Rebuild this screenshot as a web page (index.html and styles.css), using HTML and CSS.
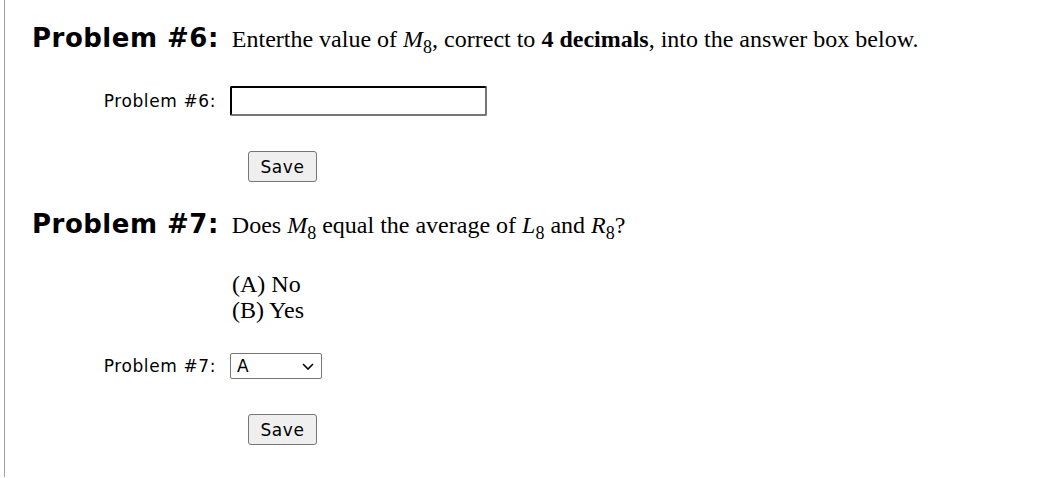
FILE: index.html
```html
<!DOCTYPE html>
<html lang="en">

<head>
    <meta charset="UTF-8">
    <title>Problems</title>
    <link rel="stylesheet" href="styles.css">
</head>

<body>
    <div class="page">
        <div class="problem">
            <h2><span class="num">Problem #6:</span> Enterthe value of <i>M</i><sub>8</sub>, correct to <b>4 decimals</b>, into the answer box below.</h2>
            <div class="answer">
                <label for="p6">Problem #6:</label>
                <input type="text" id="p6" class="box">
            </div>
            <div class="save"><button>Save</button></div>
        </div>

        <div class="problem">
            <h2><span class="num">Problem #7:</span> Does <i>M</i><sub>8</sub> equal the average of <i>L</i><sub>8</sub> and <i>R</i><sub>8</sub>?</h2>
            <div class="choices">
                (A) No<br>
                (B) Yes
            </div>
            <div class="answer">
                <label for="p7">Problem #7:</label>
                <div class="pick-wrap">
                    <select id="p7" class="pick">
                        <option>A</option>
                        <option>B</option>
                    </select>
                    <svg class="chev" width="12" height="7" viewBox="0 0 12 7">
                        <path d="M1 1 L6 6 L11 1" fill="none" stroke="#000" stroke-width="1.6" />
                    </svg>
                </div>
            </div>
            <div class="save"><button>Save</button></div>
        </div>
    </div>
</body>

</html>
```

FILE: styles.css
```css
body {
    margin: 0;
    background: #fff;
    color: #000;
}

.page {
    margin-left: 4px;
    border-left: 1px solid #a0a0a0;
    padding: 19px 0 0 27px;
    height: 458px;
}

h2 {
    margin: 0;
    font-family: 'Liberation Serif', 'Times New Roman', serif;
    font-weight: normal;
    font-size: 24px;
    line-height: 38px;
}

h2 .num {
    font-family: 'DejaVu Sans', Verdana, sans-serif;
    font-weight: bold;
    font-size: 26px;
    letter-spacing: 0.5px;
    margin-right: 7px;
}

sub {
    font-size: 0.75em;
    line-height: 0;
}

.answer {
    display: flex;
    align-items: center;
    margin-top: 28px;
    font-family: 'DejaVu Sans', Verdana, sans-serif;
    font-size: 17px;
    letter-spacing: 0.6px;
}

.answer label {
    width: 184px;
    text-align: right;
    padding-right: 14px;
}

.box {
    width: 253px;
    height: 26px;
    padding: 0;
    border: 2px inset #767676;
    border-top-color: #222;
    border-left-color: #222;
    border-radius: 2px;
}

.pick-wrap {
    position: relative;
    display: flex;
}

.pick {
    appearance: none;
    -webkit-appearance: none;
    width: 92px;
    height: 26px;
    padding: 0 0 0 6px;
    font-family: 'DejaVu Sans', Verdana, sans-serif;
    font-size: 17px;
    color: #000;
    border: 1px solid #767676;
    border-radius: 2px;
    background: #fff;
}

.chev {
    position: absolute;
    right: 8px;
    top: 10px;
    pointer-events: none;
}

.save {
    padding-left: 216px;
    margin-top: 35px;
    margin-bottom: 23px;
}

.save button {
    width: 69px;
    height: 31px;
    font-family: 'DejaVu Sans', Verdana, sans-serif;
    font-size: 17px;
    letter-spacing: 0.6px;
    background: #efefef;
    border: 1px solid #767676;
    border-radius: 3px;
    color: #000;
}

.choices {
    margin: 27px 0 0 200px;
    font-family: 'Liberation Serif', 'Times New Roman', serif;
    font-size: 24px;
    line-height: 26px;
}

.choices + .answer {
    margin-top: 30px;
}
```
